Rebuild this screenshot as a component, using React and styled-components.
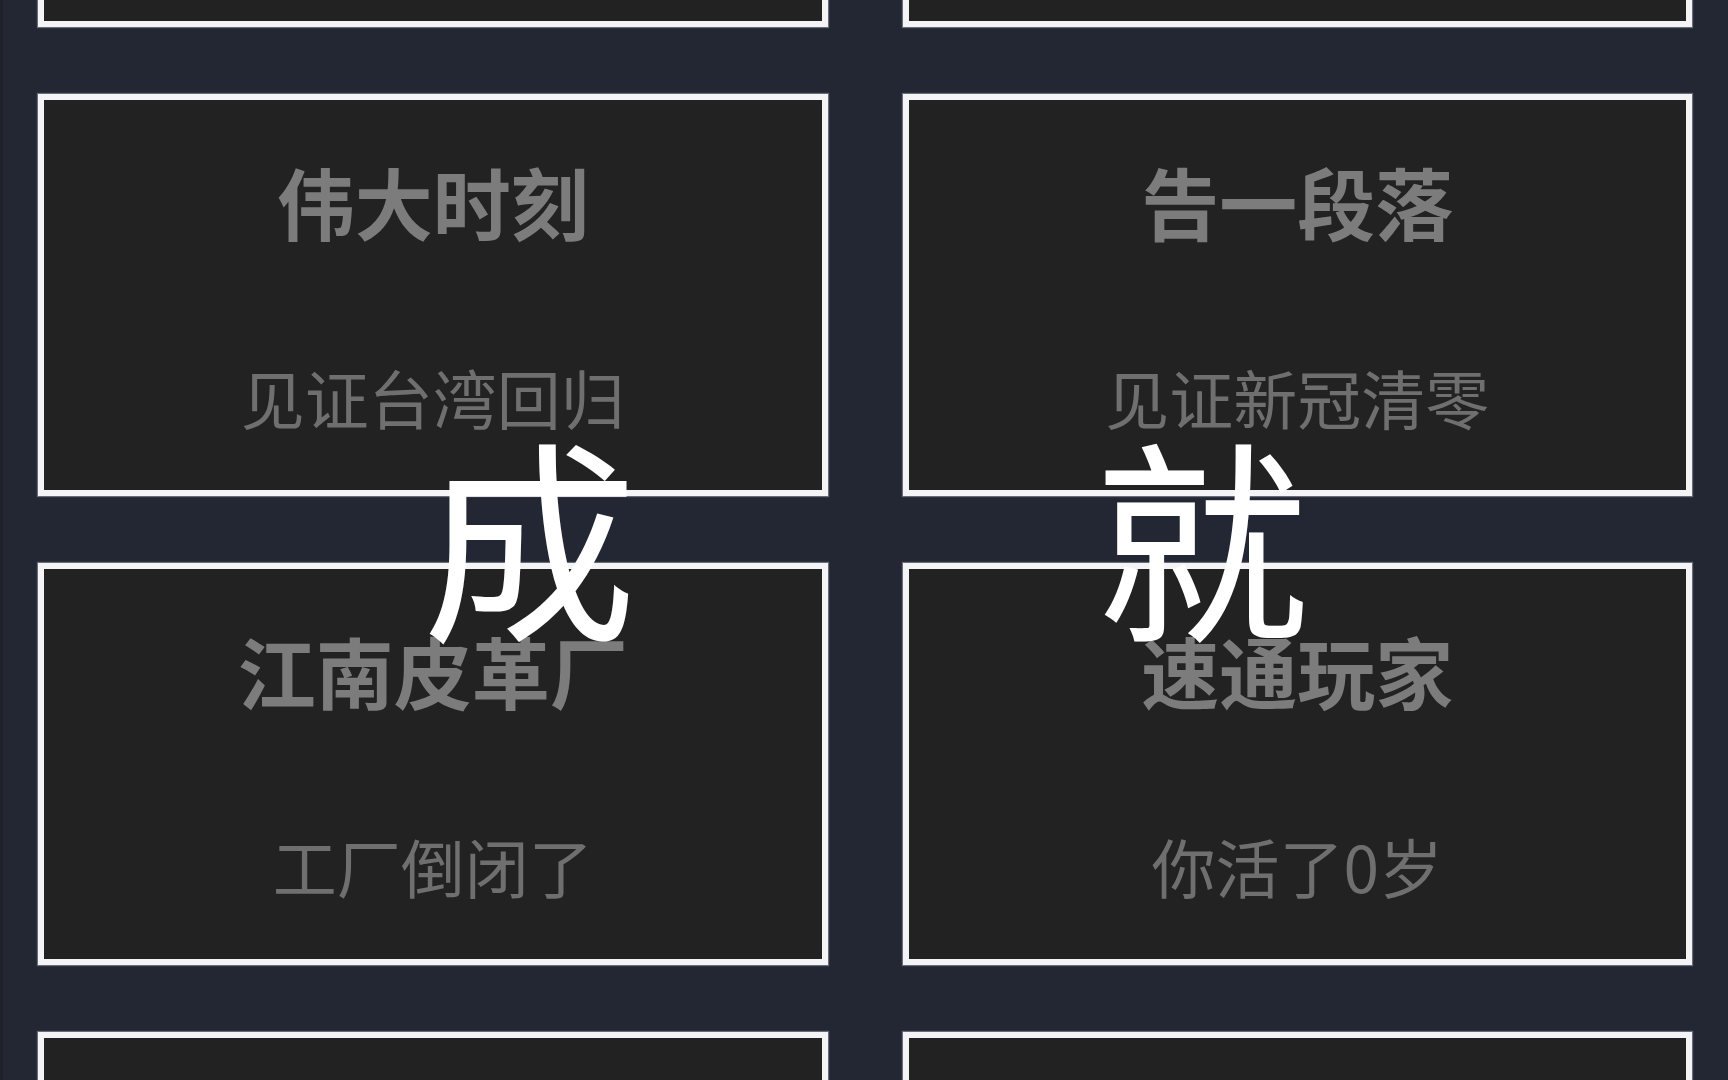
import React from "react";
import styled, { createGlobalStyle } from "styled-components";

const GlobalStyle = createGlobalStyle`
  html, body {
    margin: 0;
    padding: 0;
    background: #232733;
    overflow: hidden;
  }
  body {
    font-family: "Noto Sans CJK SC", "Noto Sans", sans-serif;
  }
`;

const Page = styled.main`
  position: relative;
  width: 1728px;
  height: 1080px;
  overflow: hidden;
  background: #232733;
  border-left: 3px solid #1e2129;
  box-sizing: border-box;
`;

const Grid = styled.section`
  display: grid;
  grid-template-columns: 1fr 1fr;
  column-gap: 75px;
  row-gap: 67px;
  padding: 0 36px 0 35px;
  margin-top: -375px;
`;

const Card = styled.article`
  height: 402px;
  box-sizing: border-box;
  background: #222222;
  border: 6px solid #f4f4f6;
  box-shadow: 0 0 1px 1px rgba(150, 155, 165, 0.6);
  display: flex;
  flex-direction: column;
  justify-content: space-between;
  align-items: center;
  padding: 62px 0 62px;
`;

const Title = styled.h2`
  margin: 0;
  font-size: 78px;
  line-height: 1;
  font-weight: 700;
  color: #7c7c7c;
`;

const Desc = styled.p`
  margin: 0;
  font-size: 64px;
  line-height: 1;
  font-weight: 400;
  color: #6f6f6f;
`;

const Overlay = styled.div`
  position: absolute;
  inset: 0;
  display: flex;
  justify-content: center;
  align-items: center;
  gap: 457px;
  pointer-events: none;
`;

const BigChar = styled.span`
  font-size: 215px;
  line-height: 1;
  font-weight: 400;
  color: #ffffff;
  margin-top: -18px;
`;

const achievements = [
  { title: "初来乍到", desc: "第一次投胎" },
  { title: "天选之人", desc: "出生在富贵之家" },
  { title: "伟大时刻", desc: "见证台湾回归" },
  { title: "告一段落", desc: "见证新冠清零" },
  { title: "江南皮革厂", desc: "工厂倒闭了" },
  { title: "速通玩家", desc: "你活了0岁" },
  { title: "长命百岁", desc: "活到100岁" },
  { title: "学富五车", desc: "智力达到10" },
];

const App = () => {
  return (
    <>
      <GlobalStyle />
      <Page>
        <Grid>
          {achievements.map((a) => (
            <Card key={a.title}>
              <Title>{a.title}</Title>
              <Desc>{a.desc}</Desc>
            </Card>
          ))}
        </Grid>
        <Overlay>
          <BigChar>成</BigChar>
          <BigChar>就</BigChar>
        </Overlay>
      </Page>
    </>
  );
};

export default App;
